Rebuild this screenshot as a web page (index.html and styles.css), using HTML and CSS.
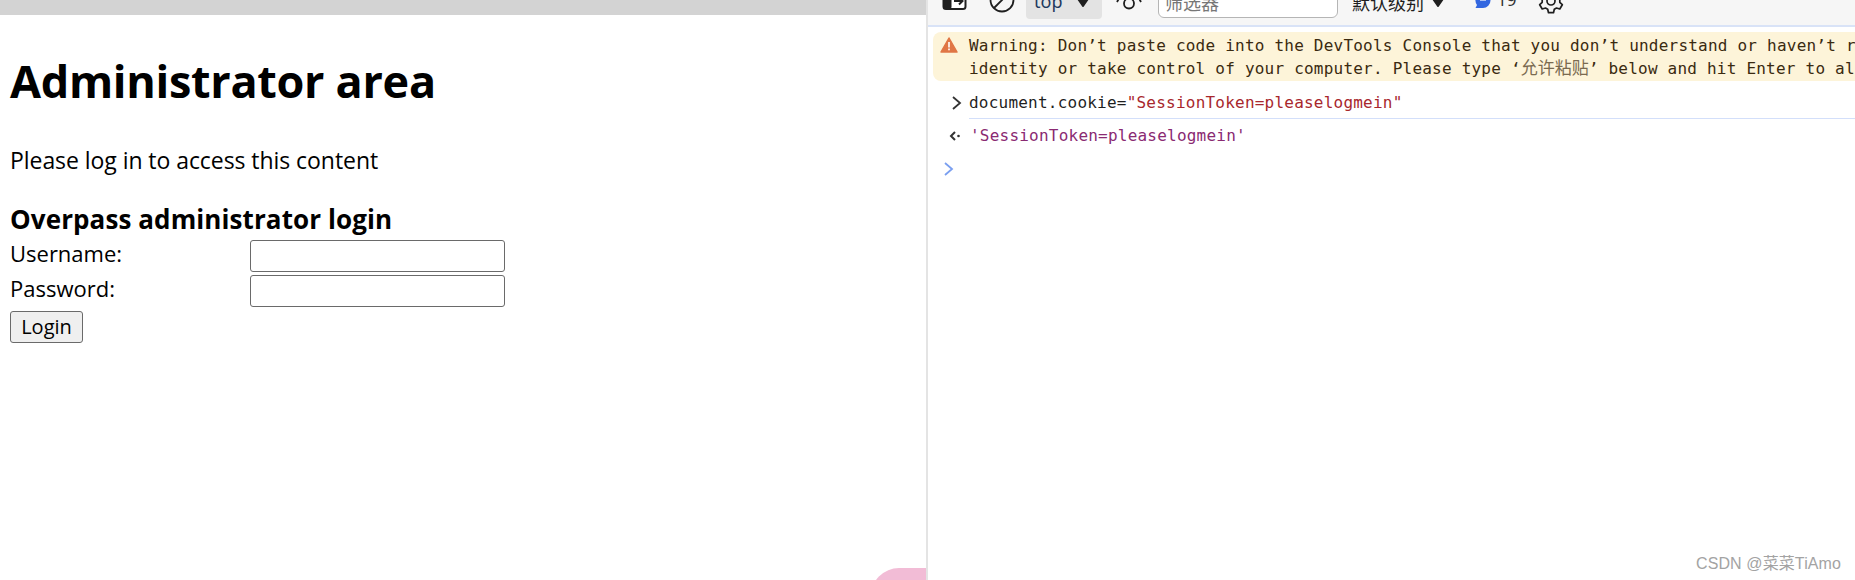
FILE: index.html
```html
<!DOCTYPE html>
<html lang="en">
<head>
<meta charset="utf-8">
<title>Administrator area</title>
<link rel="stylesheet" href="styles.css">
</head>
<body>
<div class="split">
  <main class="page">
    <div class="topbar"></div>
    <div class="content">
      <h1>Administrator area</h1>
      <p class="intro">Please log in to access this content</p>
      <h3>Overpass administrator login</h3>
      <form class="login">
        <div class="row"><label class="lbl">Username:</label><input class="field" type="text"></div>
        <div class="row"><label class="lbl">Password:</label><input class="field" type="password"></div>
        <button class="btn" type="button">Login</button>
      </form>
    </div>
    <div class="blob"></div>
  </main>
  <section class="devtools">
    <div class="toolbar">
      <svg class="ic ic-dock" width="26" height="24" viewBox="0 0 26 24"><rect x="1.500" y="1" width="22" height="17" rx="2.500" fill="#fff" stroke="#1f1f1f" stroke-width="2"/><rect x="1.500" y="1" width="8" height="17" rx="2" fill="#1f1f1f"/><path d="M12 10h8M17 6.500l3.500 3.500-3.500 3.500" fill="none" stroke="#1f1f1f" stroke-width="2"/></svg>
      <svg class="ic ic-clear" width="26" height="26" viewBox="0 0 26 26"><circle cx="13" cy="13" r="11.500" fill="none" stroke="#1f1f1f" stroke-width="1.800"/><path d="M5 21L21 5" stroke="#1f1f1f" stroke-width="1.800"/></svg>
      <div class="ctx"><span class="ctx-t">top</span><svg width="14" height="10" viewBox="0 0 14 10"><path d="M1.500 1h11L7 9z" fill="#1f1f1f" stroke="#1f1f1f" stroke-width="2" stroke-linejoin="round"/></svg></div>
      <svg class="ic ic-eye" width="26" height="24" viewBox="0 0 26 24"><circle cx="13" cy="10.500" r="5" fill="none" stroke="#1f1f1f" stroke-width="1.800"/><path d="M1 9Q2.500 6 4.500 4M25 9Q23.500 6 21.500 4" fill="none" stroke="#1f1f1f" stroke-width="1.800"/></svg>
      <div class="filter">筛选器</div>
      <span class="level">默认级别</span>
      <svg class="lv-arrow" width="14" height="10" viewBox="0 0 14 10"><path d="M1.500 1h11L7 9z" fill="#1f1f1f" stroke="#1f1f1f" stroke-width="2" stroke-linejoin="round"/></svg>
      <svg class="ic ic-msg" width="16" height="16" viewBox="0 0 16 16"><path d="M8 0a7.500 7.500 0 0 1 0 15H0.500l1.500-3A7.500 7.500 0 0 1 8 0z" fill="#3367e0"/><rect x="5" y="6" width="6" height="1.600" fill="#fff"/></svg>
      <span class="count">19</span>
      <svg class="ic ic-gear" width="26" height="26" viewBox="0 0 26 26"><path d="M10.500 1.500h5l.8 3.400 2.200 1.300 3.300-1 2.500 4.300-2.500 2.400v2.400l2.500 2.400-2.500 4.300-3.300-1-2.200 1.300-.8 3.400h-5l-.8-3.400-2.200-1.300-3.300 1-2.500-4.300 2.500-2.400v-2.400L1.700 9.500l2.500-4.300 3.300 1 2.200-1.300z" fill="none" stroke="#1f1f1f" stroke-width="1.700" stroke-linejoin="round"/><circle cx="13" cy="13" r="4" fill="none" stroke="#1f1f1f" stroke-width="1.700"/></svg>
    </div>
    <div class="console">
      <div class="warn">
        <svg class="warn-ic" width="18" height="16" viewBox="0 0 18 16"><path d="M9 1L17 15H1z" fill="#e07645" stroke="#e07645" stroke-width="1.500" stroke-linejoin="round"/><rect x="8.200" y="5" width="1.600" height="5.500" fill="#fff"/><rect x="8.200" y="11.500" width="1.600" height="1.800" fill="#fff"/></svg>
        <div class="warn-t">Warning: Don’t paste code into the DevTools Console that you don’t understand or haven’t reviewed yourself. This could allow attackers to steal your<br>identity or take control of your computer. Please type ‘<span class="cjk">允许粘贴</span>’ below and hit Enter to allow pasting.</div>
      </div>
      <div class="line line-in">
        <svg class="gut" width="12" height="16" viewBox="0 0 12 16"><path d="M2 2l7 6-7 6" fill="none" stroke="#333" stroke-width="1.800"/></svg>
        <div class="code">document.cookie=<span class="str">"SessionToken=pleaselogmein"</span></div>
      </div>
      <div class="line line-out">
        <svg class="gut" width="12" height="12" viewBox="0 0 12 12"><path d="M6 2L2 6l4 4" fill="none" stroke="#333" stroke-width="2"/><circle cx="9.500" cy="6" r="1.300" fill="#333"/></svg>
        <div class="code val">'SessionToken=pleaselogmein'</div>
      </div>
      <div class="line line-prompt">
        <svg class="gut" width="12" height="16" viewBox="0 0 12 16"><path d="M2 2l7 6-7 6" fill="none" stroke="#7a9ff0" stroke-width="1.800"/></svg>
      </div>
    </div>
    <div class="mark">CSDN @菜菜TiAmo</div>
  </section>
</div>
</body>
</html>
```
FILE: styles.css
```css
* { box-sizing: border-box; }
html, body { margin: 0; height: 100%; background: #fff; overflow: hidden; }
.split { display: flex; width: 1855px; height: 580px; }

.page { width: 926px; height: 580px; flex: none; position: relative; overflow: hidden; font-family: "Open Sans", "Noto Sans", sans-serif; color: #000; }
.topbar { height: 15px; background: #d3d3d3; }
.content { padding: 35px 10px 0; }
h1 { margin: 0; font-size: 45px; line-height: 61px; font-weight: 700; letter-spacing: -0.3px; }
.intro { margin: 34px 0 0; font-size: 23px; line-height: 31px; letter-spacing: -0.06px; }
h3 { margin: 26px 0 0; font-size: 26px; line-height: 34px; font-weight: 700; letter-spacing: .1px; }
.login { display: flex; flex-direction: column; align-items: flex-start; margin-top: 4px; }
.row { display: flex; height: 35px; align-items: flex-start; }
.lbl { width: 240px; font-size: 22px; line-height: 27px; }
.field { width: 255px; height: 32px; border: 1px solid #6a6a6a; border-radius: 3px; background: #fff; margin: 0; padding: 0; }
.btn { width: 73px; height: 32px; margin-top: 1px; padding: 0; background: #efefef; border: 1px solid #6a6a6a; border-radius: 3px; font-family: "Open Sans", sans-serif; font-size: 20px; line-height: 28px; color: #000; }
.blob { position: absolute; left: 871px; top: 568px; width: 100px; height: 80px; border-radius: 28px; background: #f2bcd6; }

.devtools { flex: 1; position: relative; height: 580px; border-left: 2px solid #e4e4e4; overflow: hidden; font-family: "DejaVu Sans Mono", "Liberation Mono", monospace; }
.toolbar { height: 27px; background: #f6f6f6; border-bottom: 2px solid #d9e3f7; display: flex; align-items: flex-end; overflow: hidden; font-family: "Noto Sans", "Noto Sans CJK SC", sans-serif; font-size: 18px; color: #1f1f1f; }
.ic, .lv-arrow { flex: none; }
.ic-dock { margin: 0 0 10px 14px; }
.ic-clear { margin: 0 0 12px 21px; }
.ctx { width: 76px; height: 40px; flex: none; margin: 0 0 6px 11px; padding: 0 12px 0 8px; background: #e3e3e3; border-radius: 4px; display: flex; align-items: flex-end; justify-content: space-between; color: #1f3a5f; line-height: 24px; }
.ctx-t { margin-bottom: 6px; }
.ctx svg { margin-bottom: 12px; }
.ic-eye { margin: 0 0 8px 14px; }
.filter { width: 180px; height: 40px; flex: none; margin: 0 0 7px 16px; padding: 0 6px 2px; background: #fff; border: 1px solid #b5b5b5; border-radius: 6px; color: #777; display: flex; align-items: flex-end; line-height: 24px; }
.level { margin: 0 0 10px 14px; line-height: 24px; flex: none; }
.lv-arrow { margin: 0 0 18px 7px; }
.ic-msg { margin: 0 0 16px 30px; }
.count { margin: 0 0 13px 6px; line-height: 24px; color: #333; font-size: 17px; }
.ic-gear { margin: 0 0 11px 22px; }

.console { font-size: 16px; line-height: 22px; letter-spacing: .22px; color: #1f1f1f; }
.warn { margin: 5px 0 0 5px; height: 49px; padding: 3px 0 0 8px; background: #fdf4d9; border-radius: 8px 0 0 8px; display: flex; color: #3a2a10; white-space: nowrap; overflow: hidden; }
.warn-ic { flex: none; margin: 2px 0 0 -1px; }
.warn-t { margin-left: 11px; }
.cjk { font-family: "Noto Sans CJK SC", sans-serif; font-size: 17px; color: #7a6a50; letter-spacing: 0; line-height: 20px; }
.line { display: flex; align-items: center; }
.line-in { height: 38px; margin-left: 23px; position: relative; padding-top: 6px; }
.line-out { height: 33px; margin-left: 21px; }
.line-out .gut { margin-right: 9px; }
.line-prompt { height: 33px; margin-left: 15px; }
.gut { flex: none; margin-right: 7px; }
.line-in .code { flex: 1; }
.line-in .gut { margin-right: 6px; }
.line-in::after { content: ""; position: absolute; left: 18px; right: 0; bottom: 0; border-bottom: 1px solid #d3dffa; }
.str { color: #a8272d; }
.val { color: #8a2a72; }
.mark { position: absolute; right: 14px; bottom: 6px; font-family: "Liberation Sans", "Noto Sans CJK SC", sans-serif; font-size: 16px; line-height: 20px; color: #a3a3a3; letter-spacing: .1px; }
```
